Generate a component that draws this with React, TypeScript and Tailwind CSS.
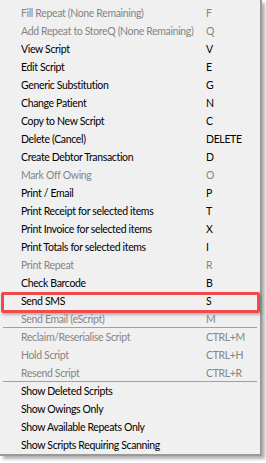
const items: { label: string; key?: string; disabled?: boolean; sep?: boolean; marked?: boolean }[] = [
  { label: 'Fill Repeat (None Remaining)', key: 'F', disabled: true },
  { label: 'Add Repeat to StoreQ (None Remaining)', key: 'Q', disabled: true },
  { label: 'View Script', key: 'V' },
  { label: 'Edit Script', key: 'E' },
  { label: 'Generic Substitution', key: 'G' },
  { label: 'Change Patient', key: 'N' },
  { label: 'Copy to New Script', key: 'C' },
  { label: 'Delete (Cancel)', key: 'DELETE' },
  { label: 'Create Debtor Transaction', key: 'D' },
  { label: 'Mark Off Owing', key: 'O', disabled: true },
  { label: 'Print / Email', key: 'P' },
  { label: 'Print Receipt for selected items', key: 'T' },
  { label: 'Print Invoice for selected items', key: 'X' },
  { label: 'Print Totals for selected items', key: 'I' },
  { label: 'Print Repeat', key: 'R', disabled: true },
  { label: 'Check Barcode', key: 'B' },
  { label: 'Send SMS', key: 'S', marked: true },
  { label: 'Send Email (eScript)', key: 'M', disabled: true },
  { label: 'Reclaim/Reserialise Script', key: 'CTRL+M', disabled: true, sep: true },
  { label: 'Hold Script', key: 'CTRL+H', disabled: true },
  { label: 'Resend Script', key: 'CTRL+R', disabled: true },
  { label: 'Show Deleted Scripts', sep: true },
  { label: 'Show Owings Only' },
  { label: 'Show Available Repeats Only' },
  { label: 'Show Scripts Requiring Scanning' },
]

export default function App() {
  return (
    <div className="w-[266px] h-[463px] bg-white overflow-hidden" style={{ fontFamily: 'Lato, "Noto Sans", sans-serif' }}>
      <div className="w-[262px] bg-[#f0f0f0] border-r-2 border-b-2 border-[#9a9a9a] pt-1 shadow-[3px_3px_3px_rgba(0,0,0,0.3)]">
        {items.map((item, i) => (
          <div key={i} className="relative">
            {item.sep && <div className="absolute left-[3px] right-[3px] -top-px h-px bg-[#a0a0a0]" />}
            <div
              className={`flex items-center h-[18px] text-[10.5px] tracking-[-0.35px] leading-none ${
                item.disabled ? 'text-[#858585]' : 'text-black'
              }`}
            >
              <span className="pl-[21px] w-[206px] whitespace-nowrap">{item.label}</span>
              <span className="whitespace-nowrap">{item.key}</span>
            </div>
            {item.marked && (
              <div className="absolute left-px top-0 w-[259px] h-[21px] border-[3px] border-[#f24a4a] rounded-[2px] shadow-[1px_2px_3px_rgba(0,0,0,0.25)]" />
            )}
          </div>
        ))}
      </div>
    </div>
  )
}
